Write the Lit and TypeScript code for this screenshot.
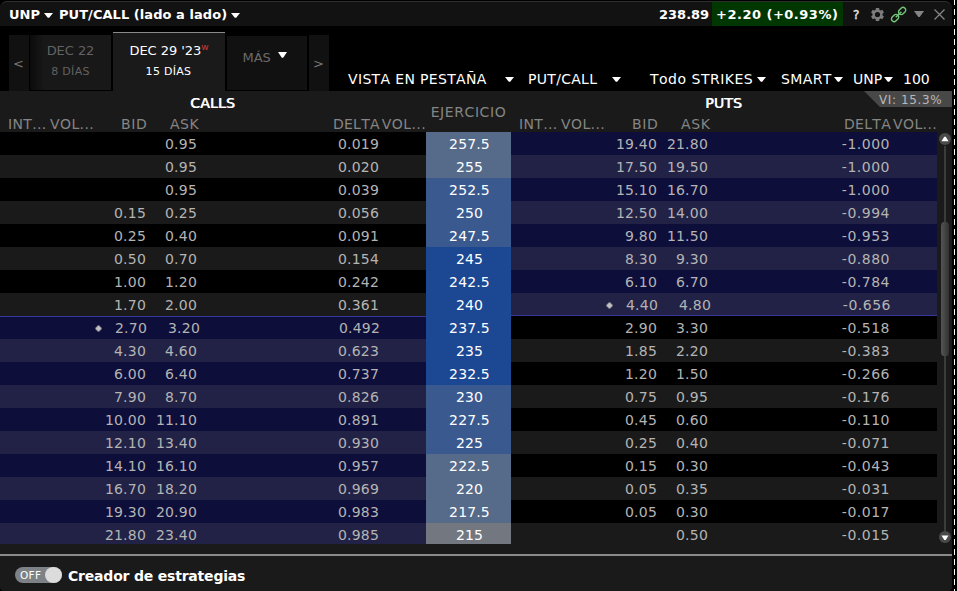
import { LitElement, html, css, nothing } from "lit";
import { customElement, property } from "lit/decorators.js";
import { classMap } from "lit/directives/class-map.js";

type Quote = [bid: string, ask: string, delta: string];
interface Line { strike: string; tone: string; call: Quote; put: Quote; }

const line = (strike: string, tone: string, call: string, put: string): Line => ({
  strike,
  tone,
  call: call.split(",") as Quote,
  put: put.split(",") as Quote,
});

const LINES: Line[] = [
  line("257.5", "far", ",0.95,0.019", "19.40,21.80,-1.000"),
  line("255", "far", ",0.95,0.020", "17.50,19.50,-1.000"),
  line("252.5", "mid", ",0.95,0.039", "15.10,16.70,-1.000"),
  line("250", "mid", "0.15,0.25,0.056", "12.50,14.00,-0.994"),
  line("247.5", "mid", "0.25,0.40,0.091", "9.80,11.50,-0.953"),
  line("245", "near", "0.50,0.70,0.154", "8.30,9.30,-0.880"),
  line("242.5", "near", "1.00,1.20,0.242", "6.10,6.70,-0.784"),
  line("240", "near", "1.70,2.00,0.361", "4.40,4.80,-0.656"),
  line("237.5", "near", "2.70,3.20,0.492", "2.90,3.30,-0.518"),
  line("235", "near", "4.30,4.60,0.623", "1.85,2.20,-0.383"),
  line("232.5", "near", "6.00,6.40,0.737", "1.20,1.50,-0.266"),
  line("230", "mid", "7.90,8.70,0.826", "0.75,0.95,-0.176"),
  line("227.5", "mid", "10.00,11.10,0.891", "0.45,0.60,-0.110"),
  line("225", "mid", "12.10,13.40,0.930", "0.25,0.40,-0.071"),
  line("222.5", "far", "14.10,16.10,0.957", "0.15,0.30,-0.043"),
  line("220", "far", "16.70,18.20,0.969", "0.05,0.35,-0.031"),
  line("217.5", "far", "19.30,20.90,0.983", "0.05,0.30,-0.017"),
  line("215", "edge", "21.80,23.40,0.985", ",0.50,-0.015"),
];

const CALL_AT_MONEY = 8;
const PUT_AT_MONEY = 7;

@customElement("drop-arrow")
export class DropArrow extends LitElement {
  @property({ type: Number }) width = 9;
  @property({ type: Number }) height = 5;
  static styles = css`
    :host { display: block; flex: none; line-height: 0; }
    svg { display: block; }
  `;
  render() {
    return html`<svg width=${this.width} height=${this.height} viewBox="0 0 9 5" preserveAspectRatio="none"><path d="M0 0H9L5.2 4.8H3.8Z" fill="currentColor" /></svg>`;
  }
}

@customElement("title-bar")
export class TitleBar extends LitElement {
  static styles = css`
    :host {
      display: flex; align-items: stretch; height: 25px; margin-top: 1px; box-sizing: border-box;
      background: #121212; border-top: 1px solid #2e2e2e; border-radius: 7px 7px 0 0;
      font-weight: bold; font-size: 13px; line-height: 26px; padding-left: 9px; color: #fff;
    }
    .name { width: 35px; }
    drop-arrow { margin-top: 11px; }
    .mode { margin-left: 6px; width: 172px; letter-spacing: 0.05px; }
    .price { margin-left: auto; width: 53px; }
    .change { width: 131px; box-sizing: border-box; padding-left: 4px; background: #003600; letter-spacing: 0.5px; }
    .tools { width: 109px; display: flex; color: #858585; }
    .help { font-weight: normal; color: #e8e8e8; width: 27px; padding-left: 10px; box-sizing: border-box; font-size: 12px; -webkit-text-stroke: 0.4px #e8e8e8; }
    .tools svg { flex: none; display: block; }
  `;
  render() {
    return html`
      <span class="name">UNP</span><drop-arrow></drop-arrow>
      <span class="mode">PUT/CALL (lado a lado)</span><drop-arrow></drop-arrow>
      <span class="price">238.89</span>
      <span class="change">+2.20 (+0.93%)</span>
      <div class="tools">
        <span class="help">?</span>
        <svg width="82" height="24" viewBox="870 2 82 24" fill="none">
          <g transform="translate(877.5 14.5)" fill="#7c7c7c" fill-rule="evenodd">
            <path d="M-1.6-6.4H1.6L2-4.6 3.2-4 4.8-4.8 6.4-2 5-.8V.8L6.4 2 4.8 4.8 3.2 4 2 4.6 1.6 6.4H-1.6L-2 4.6-3.2 4-4.8 4.8-6.4 2-5 .8V-.8L-6.4-2-4.8-4.8-3.2-4-2-4.6ZM0-2.6A2.6 2.6 0 1 0 0 2.6 2.6 2.6 0 1 0 0-2.6Z" />
          </g>
          <g transform="translate(898.6 14.5) rotate(-45)" stroke="#72c47a" stroke-width="1.4">
            <rect x="-9" y="-2.7" width="8" height="5.4" rx="2.7" />
            <rect x="1" y="-2.7" width="8" height="5.4" rx="2.7" />
            <path d="M-4 0H4" />
          </g>
          <path d="M914 11h10l-4.3 6h-1.4Z" fill="#858585" />
          <path d="M934.5 9.5l10 10M944.5 9.5l-10 10" stroke="#858585" stroke-width="1.3" />
        </svg>
      </div>`;
  }
}

@customElement("expiry-bar")
export class ExpiryBar extends LitElement {
  static styles = css`
    :host { display: flex; height: 65px; padding-left: 9px; box-sizing: border-box; align-items: flex-end; }
    .step { width: 20px; height: 56px; background: #111; color: #777; font-size: 13px; line-height: 57px; text-align: center; text-indent: -1px; }
    .tab { box-sizing: border-box; text-align: center; font-size: 13px; }
    .first { width: 81px; height: 55px; margin: 0 2px 1px 1px; background: linear-gradient(90deg, #0b0b0b, #181818 14px); color: #626262; padding-top: 7px; }
    .current { width: 112px; height: 59px; border-top: 1px solid #8a8a8a; background: #1a1a1a; color: #fff; padding-top: 9px; }
    .date { line-height: 18px; height: 18px; white-space: nowrap; letter-spacing: -0.05px; }
    .days { line-height: 23px; font-size: 11px; letter-spacing: 0.3px; }
    .current .days { text-indent: -1px; }
    .week { display: inline-block; font-size: 9px; line-height: 9px; color: #d03a3a; transform: translateY(-5px); }
    .more { width: 80px; height: 54px; margin: 0 2px 1px; background: #111; color: #6a6a6a; display: flex; padding: 0 0 0 15.5px; line-height: 44px; }
    .more drop-arrow { color: #fff; margin: 16px 0 0 7px; }
    .filters { display: flex; line-height: 24px; font-size: 14px; color: #fff; white-space: nowrap; margin-left: 19px; }
    .filters drop-arrow { margin-top: 10px; }
    .view { width: 157px; letter-spacing: 0.34px; }
    .side { margin-left: 14px; width: 84px; letter-spacing: 0.3px; }
    .strikes { margin-left: 29px; width: 107px; letter-spacing: 0.5px; }
    .route { margin-left: 15px; width: 53px; letter-spacing: 0.4px; }
    .symbol { margin-left: 10px; width: 31px; }
    .size { margin-left: 10px; }
  `;
  render() {
    return html`
      <div class="step">&lt;</div>
      <div class="tab first"><div class="date">DEC 22</div><div class="days">8 DÍAS</div></div>
      <div class="tab current">
        <div class="date">DEC 29 '23<span class="week">w</span></div>
        <div class="days">15 DÍAS</div>
      </div>
      <div class="tab more">MÁS<drop-arrow height="6"></drop-arrow></div>
      <div class="step">&gt;</div>
      <div class="filters">
        <span class="view">VISTA EN PESTAÑA</span><drop-arrow></drop-arrow>
        <span class="side">PUT/CALL</span><drop-arrow></drop-arrow>
        <span class="strikes">Todo STRIKES</span><drop-arrow></drop-arrow>
        <span class="route">SMART</span><drop-arrow></drop-arrow>
        <span class="symbol">UNP</span><drop-arrow></drop-arrow>
        <span class="size">100</span>
      </div>`;
  }
}

@customElement("option-chain")
export class OptionChain extends LitElement {
  static styles = css`
    :host { display: block; background: #1a1a1a; height: 465px; font-size: 14px; }
    .head { display: grid; grid-template-columns: 426px 85px 441px; height: 41px; color: #858585; }
    .side { position: relative; }
    .name { color: #fff; text-align: center; width: 425px; line-height: 24px; height: 24px; text-shadow: 0.6px 0 #fff; letter-spacing: 0.2px; }
    .labels { display: flex; line-height: 18px; padding-left: 8px; white-space: nowrap; }
    .labels .a { width: 42px; letter-spacing: 0.35px; }
    .labels .v { width: 71px; letter-spacing: 0.4px; }
    .labels .b { width: 49px; letter-spacing: 0.6px; }
    .labels .k { width: 163px; letter-spacing: 0.6px; }
    .labels .d { width: 49px; letter-spacing: 0.3px; }
    .labels .w { letter-spacing: 0.4px; }
    .strike-head { text-align: center; line-height: 42px; letter-spacing: 0.58px; }
    .vi { position: absolute; right: 0; top: 0; height: 16px; width: 88px; box-sizing: border-box; padding-left: 15px; background: #484848; clip-path: polygon(0 0, 100% 0, 100% 100%, 16px 100%); color: #b8b8b8; font-size: 12px; line-height: 18px; letter-spacing: 0.62px; white-space: nowrap; }
    .body { display: flex; height: 412px; overflow: hidden; }
    .lines { width: 937px; flex: none; }
    .line { display: grid; grid-template-columns: 426px 85px 426px; height: 23px; line-height: 24px; }
    .half { display: grid; grid-template-columns: 146px 51px 182px; text-align: right; color: #b4b4b4; background: #000; letter-spacing: 0.2px; box-sizing: border-box; height: 23px; position: relative; }
    .alt .half { background: #1a1a1a; }
    .half.itm { background: #0e0e3a; }
    .alt .half.itm { background: #222246; }
    .half.money-top { border-top: 1px solid #38389a; line-height: 23px; grid-template-columns: 147px 53px 180px; }
    .half.money-bottom { border-bottom: 1px solid #38389a; grid-template-columns: 147px 53px 180px; }
    .mark { position: absolute; left: 94.5px; top: 9px; display: block; }
    .money-top .mark { top: 8px; }
    .strike + .half span:last-of-type { letter-spacing: 0.5px; }
    .strike { text-align: center; color: #fff; padding-left: 2px; letter-spacing: 0.15px; }
    .far { background: #566a8a; }
    .mid { background: #3a5a8f; }
    .near { background: #1c4793; }
    .edge { background: #737780; }
    .scroll { width: 15px; }
    .scroll svg { display: block; }
    .rule { height: 2px; background: #8a8a8a; margin-top: 10px; width: 952px; }
  `;

  private half(q: Quote, itm: boolean, border: string) {
    return html`<div class=${classMap({ half: true, itm, [border || "plain"]: true })}>
      <span>${q[0]}</span><span>${q[1]}</span><span>${q[2]}</span>
      ${border ? html`<svg class="mark" width="7" height="7" viewBox="0 0 7 7"><path d="M2.5.5h2v1h1v1h1v2h-1v1h-1v1h-2v-1h-1v-1h-1v-2h1v-1h1Z" fill="#c0c0c0" /></svg>` : nothing}
    </div>`;
  }

  private head(name: string, extra: unknown = nothing) {
    return html`<div class="side">
      <div class="name">${name}</div>
      <div class="labels"><span class="a">INT...</span><span class="v">VOL...</span><span class="b">BID</span><span class="k">ASK</span><span class="d">DELTA</span><span class="w">VOL...</span></div>
      ${extra}
    </div>`;
  }

  render() {
    return html`
      <div class="head">
        ${this.head("CALLS")}
        <div class="strike-head">EJERCICIO</div>
        ${this.head("PUTS", html`<div class="vi">VI: 15.3%</div>`)}
      </div>
      <div class="body">
        <div class="lines">
          ${LINES.map((l, i) => html`<div class=${classMap({ line: true, alt: i % 2 === 1 })}>
            ${this.half(l.call, i >= CALL_AT_MONEY, i === CALL_AT_MONEY ? "money-top" : "")}
            <div class="strike ${l.tone}">${l.strike}</div>
            ${this.half(l.put, i <= PUT_AT_MONEY, i === PUT_AT_MONEY ? "money-bottom" : "")}
          </div>`)}
        </div>
        <div class="scroll">
          <svg width="15" height="412" viewBox="937 132 15 412">
            <defs><linearGradient id="thumb"><stop stop-color="#555" /><stop offset="1" stop-color="#323232" /></linearGradient></defs>
            <path d="M944 146h2v385h-2Z" fill="#3c3c3c" />
            <path d="M941 226q0-3 2-4h4q2 1 2 4V352q0 3-2 4h-4q-2-1-2-4Z" fill="url(#thumb)" />
            <circle cx="945" cy="139" r="6" fill="#4a4a4a" />
            <path d="M941.5 141.3h7l-2.8-4.6h-1.4Z" fill="#fff" />
            <circle cx="945" cy="537" r="6" fill="#4a4a4a" />
            <path d="M941.5 535.4h7l-2.8 4.6h-1.4Z" fill="#fff" />
          </svg>
        </div>
      </div>
      <div class="rule"></div>`;
  }
}

@customElement("app-root")
export class AppRoot extends LitElement {
  static styles = css`
    :host {
      display: flex; width: 957px; height: 591px; overflow: hidden; background: #000;
      font-family: "DejaVu Sans", sans-serif; font-kerning: none;
    }
    .panel { width: 952px; flex: none; display: flex; flex-direction: column; }
    .footer { flex: 1; background: #1a1a1a; border-radius: 0 0 4px 4px; display: flex; align-items: center; gap: 6px; padding: 0 0 0 15px; color: #fff; }
    .switch { width: 47px; height: 16px; margin-top: 3px; border-radius: 8px; background: #7d8286; display: flex; align-items: center; justify-content: space-between; font-size: 10.5px; line-height: 18px; padding-left: 5px; box-sizing: border-box; letter-spacing: 0.3px; }
    .knob { width: 17px; height: 16px; border-radius: 50%; background: #dcdcdc; }
    .builder { font-weight: bold; font-size: 14px; letter-spacing: -0.2px; margin-top: 5px; }
    .edge { width: 1px; margin-left: 2px; background: repeating-linear-gradient(#fff 0 5px, #000 5px 9px, #fff 9px 10px); }
  `;
  render() {
    return html`
      <div class="panel">
        <title-bar></title-bar>
        <expiry-bar></expiry-bar>
        <option-chain></option-chain>
        <div class="footer">
          <div class="switch"><span>OFF</span><span class="knob"></span></div>
          <span class="builder">Creador de estrategias</span>
        </div>
      </div>
      <div class="edge"></div>`;
  }
}
